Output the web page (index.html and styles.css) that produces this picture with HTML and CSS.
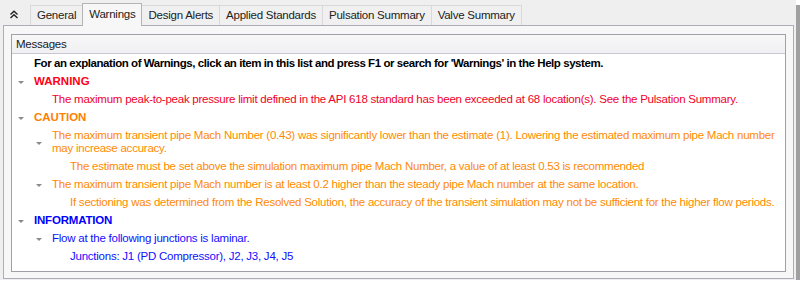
FILE: index.html
```html
<!DOCTYPE html>
<html>
<head>
<meta charset="utf-8">
<link rel="stylesheet" href="styles.css">
</head>
<body>
<div class="window">
  <div class="strip">
    <div class="collapse">
      <svg width="10" height="9" viewBox="0 0 10 9"><path d="M1.5 4.5 L5 1.2 L8.5 4.5 M1.5 8 L5 4.7 L8.5 8" fill="none" stroke="#222" stroke-width="1.4"/></svg>
    </div>
    <div class="tabs">
      <div class="tab">General</div>
      <div class="tab active">Warnings</div>
      <div class="tab">Design Alerts</div>
      <div class="tab">Applied Standards</div>
      <div class="tab">Pulsation Summary</div>
      <div class="tab">Valve Summary</div>
    </div>
  </div>
  <div class="panel">
    <div class="box">
      <div class="header">Messages</div>
      <div class="list">
        <div class="row l0 bold">For an explanation of Warnings, click an item in this list and press F1 or search for 'Warnings' in the Help system.</div>
        <div class="row l0 arrow bold red">WARNING</div>
        <div class="row l1 red">The maximum peak-to-peak pressure limit defined in the API 618 standard has been exceeded at 68 location(s). See the Pulsation Summary.</div>
        <div class="row l0 arrow bold orange">CAUTION</div>
        <div class="row l1 arrow orange">The maximum transient pipe Mach Number (0.43) was significantly lower than the estimate (1). Lowering the estimated maximum pipe Mach number may increase accuracy.</div>
        <div class="row l2 orange">The estimate must be set above the simulation maximum pipe Mach Number, a value of at least 0.53 is recommended</div>
        <div class="row l1 arrow orange">The maximum transient pipe Mach number is at least 0.2 higher than the steady pipe Mach number at the same location.</div>
        <div class="row l2 orange">If sectioning was determined from the Resolved Solution, the accuracy of the transient simulation may not be sufficient for the higher flow periods.</div>
        <div class="row l0 arrow bold blue">INFORMATION</div>
        <div class="row l1 arrow blue">Flow at the following junctions is laminar.</div>
        <div class="row l2 blue">Junctions: J1 (PD Compressor), J2, J3, J4, J5</div>
      </div>
    </div>
  </div>
</div>
</body>
</html>
```
FILE: styles.css
```css
html, body {
  margin: 0;
  padding: 0;
  background: #ffffff;
}
body {
  font-family: "Liberation Sans", Arial, sans-serif;
  font-size: 11.5px;
  letter-spacing: -0.24px;
}
.window {
  width: 796px;
  height: 280px;
  background: #efefef;
  box-shadow: 4px 5px 0 0 #a0a0a0;
  display: flex;
  flex-direction: column;
}
.strip {
  height: 25px;
  display: flex;
  align-items: flex-end;
  position: relative;
  z-index: 1;
}
.collapse {
  width: 30px;
  height: 25px;
  display: flex;
  align-items: center;
  justify-content: center;
  padding-right: 3px;
  box-sizing: border-box;
  padding-top: 3px;
}
.collapse svg { display: block; }
.tabs {
  display: flex;
  align-items: flex-end;
  height: 25px;
}
.tab {
  height: 19px;
  line-height: 19px;
  padding: 0 6px;
  background: #f0f0f0;
  border: 1px solid #d9d9d9;
  border-bottom: none;
  color: #222;
  margin-left: -1px;
}
.tab:first-child { margin-left: 0; }
.tab.active {
  height: 22px;
  line-height: 21px;
  background: #f7f7f7;
  border-color: #b4b4b4;
  margin-bottom: -1px;
  position: relative;
  z-index: 2;
}
.panel {
  flex: 1;
  margin: 0 2px 1px 3px;
  border: 1px solid #adadb5;
  background: #f7f7f7;
  padding: 8px 7px 6px 7px;
  display: flex;
  flex-direction: column;
}
.box {
  flex: 1;
  border: 1px solid #a0a0aa;
  background: #ffffff;
  display: flex;
  flex-direction: column;
}
.header {
  height: 18px;
  line-height: 18px;
  padding-left: 4px;
  background: linear-gradient(#f8f8f9, #f0f0f2);
  border-bottom: 1px solid #c8c8d0;
  color: #1a1a1a;
}
.row {
  position: relative;
  padding: 2.5px 8px 2.5px 0;
  line-height: 13px;
}
.l0 { padding-left: 22px; }
.l1 { padding-left: 40px; }
.l2 { padding-left: 58px; }
.arrow::before {
  content: "";
  position: absolute;
  top: 50%;
  margin-top: 0px;
  border-left: 3px solid transparent;
  border-right: 3px solid transparent;
  border-top: 3px solid #8a8a8a;
}
.l0.arrow::before { left: 6px; }
.l1.arrow::before { left: 24px; }
.bold { font-weight: bold; color: #000; letter-spacing: -0.44px; }
.red { color: #f0002a; }
.orange { color: #ff8a00; }
.blue { color: #1010ff; }
.bold.red { color: #ff0014; letter-spacing: 0; }
.bold.orange { color: #ff8000; letter-spacing: 0; }
.bold.blue { color: #0000ff; letter-spacing: -0.2px; }
```
